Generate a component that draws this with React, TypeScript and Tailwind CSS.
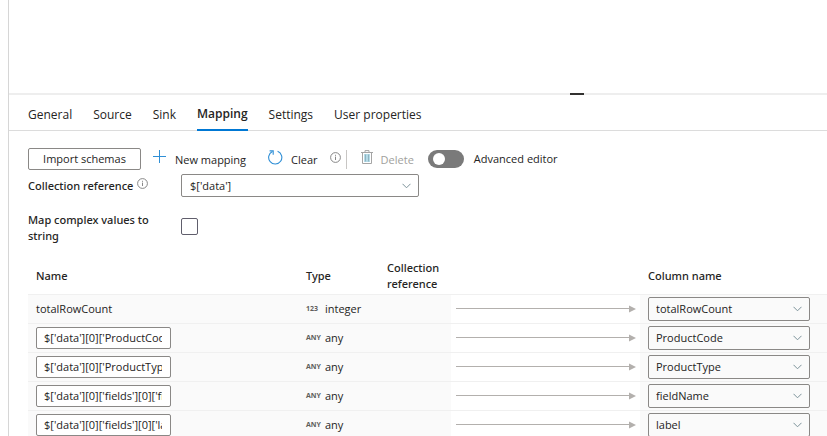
const tabs = ["General", "Source", "Sink", "Mapping", "Settings", "User properties"];

const mappings = [
  { name: "totalRowCount", badge: "123", type: "integer", column: "totalRowCount", editable: false },
  { name: "$['data'][0]['ProductCode']", badge: "ANY", type: "any", column: "ProductCode", editable: true },
  { name: "$['data'][0]['ProductType']", badge: "ANY", type: "any", column: "ProductType", editable: true },
  { name: "$['data'][0]['fields'][0]['fieldName']", badge: "ANY", type: "any", column: "fieldName", editable: true },
  { name: "$['data'][0]['fields'][0]['label']", badge: "ANY", type: "any", column: "label", editable: true },
];

function InfoIcon() {
  return (
    <svg width="11" height="11" viewBox="0 0 11 11" fill="none" className="shrink-0">
      <circle cx="5.5" cy="5.5" r="4.9" stroke="#7a7a7a" strokeWidth="0.9" />
      <path d="M5.5 4.6v3.4M5.5 2.8v1" stroke="#7a7a7a" strokeWidth="0.9" />
    </svg>
  );
}

function PlusIcon() {
  return (
    <svg width="14" height="14" viewBox="0 0 14 14" fill="none" className="shrink-0">
      <path d="M6.5 0v13M0 6.5h13" stroke="#2f8fd6" />
    </svg>
  );
}

function RefreshIcon() {
  return (
    <svg width="15" height="15" viewBox="0 0 15 15" fill="none" className="shrink-0">
      <path d="M9.6 1.3A6.6 6.6 0 1 1 4.4 1.5" stroke="#2f8fd6" strokeWidth="1.1" />
      <path d="M1.6 0.9h3.6v3.8" stroke="#2f8fd6" strokeWidth="1.1" />
    </svg>
  );
}

function TrashIcon() {
  return (
    <svg width="12" height="14" viewBox="0 0 12 14" fill="none" className="shrink-0">
      <path d="M0 2.5h12M4 2.3V0.6h4v1.7" stroke="#a5a5a5" />
      <path d="M1.5 2.5v11h9v-11" stroke="#a5a5a5" />
      <path d="M3 4h6v8H3z" fill="#b5dbe8" />
      <path d="M4.5 4.5v7M7.5 4.5v7" stroke="#8fb4c1" />
    </svg>
  );
}

function Chevron() {
  return (
    <svg
      width="9"
      height="6"
      viewBox="0 0 9 6"
      fill="none"
      className="pointer-events-none absolute right-2 top-1/2 -translate-y-1/2"
    >
      <path d="M0.5 0.8l4 4 4-4" stroke="#7c9299" />
    </svg>
  );
}

function Arrow() {
  return (
    <div className="flex items-center pl-[5px] pr-1">
      <div className="h-px flex-1 bg-[#b3b0ad]" />
      <svg width="7" height="8" viewBox="0 0 7 8">
        <path d="M0 0.5l7 3.5-7 3.5z" fill="#b3b0ad" />
      </svg>
    </div>
  );
}

export default function App() {
  return (
    <div className="h-screen overflow-hidden bg-white pl-2 font-['Open_Sans','Noto_Sans',sans-serif] text-[11px] leading-4 text-[#252423]">
      <div className="flex h-full flex-col border-l border-[#d6d6d6]">
        <div className="h-[93px] shrink-0" />
        <div className="grid h-0.5 shrink-0 grid-cols-[561px_14px_1fr] bg-[#eeeeee]">
          <div className="col-start-2 bg-[#323130]" />
        </div>

        <nav className="flex h-9 shrink-0 gap-[21px] border-b border-[#dcdcdc] pl-[19px] text-[12px]">
          {tabs.map((tab) => (
            <a
              key={tab}
              href="#"
              className={
                tab === "Mapping"
                  ? "-mb-px flex items-center border-b-2 border-[#0078d4] pt-1 font-semibold"
                  : "flex items-center pt-1"
              }
            >
              {tab}
            </a>
          ))}
        </nav>

        <div className="flex shrink-0 items-center pl-[19px] pt-[17px]">
          <button className="h-[22px] w-[113px] rounded-xs border border-[#8a8886]">Import schemas</button>
          <button className="ml-3 flex gap-2">
            <PlusIcon />
            <span className="pt-0.5">New mapping</span>
          </button>
          <button className="ml-[22px] flex gap-2">
            <RefreshIcon />
            <span className="pt-0.5">Clear</span>
          </button>
          <span className="ml-3 pb-1">
            <InfoIcon />
          </span>
          <div className="ml-[5px] h-[19px] w-px bg-[#c8c6c4]" />
          <button disabled className="ml-3.5 flex gap-2 text-[#a19f9d]">
            <TrashIcon />
            <span className="pt-0.5">Delete</span>
          </button>
          <label className="ml-3.5 flex items-center gap-2.5">
            <input
              type="checkbox"
              role="switch"
              className="h-[18px] w-9 appearance-none rounded-full bg-[#7a7a7a] before:ml-[5px] before:mt-[3px] before:block before:size-3 before:rounded-full before:bg-white"
            />
            Advanced editor
          </label>
        </div>

        <div className="flex shrink-0 items-center pl-[19px] pt-1">
          <label htmlFor="collection" className="flex w-[153px] gap-1 font-['Noto_Sans',sans-serif] font-medium">
            Collection reference
            <InfoIcon />
          </label>
          <div className="relative w-[238px]">
            <select id="collection" className="block h-[23px] w-full appearance-none rounded-xs border border-[#8a8886] px-2">
              <option>$['data']</option>
            </select>
            <Chevron />
          </div>
        </div>

        <div className="flex shrink-0 items-start pl-[19px] pt-[15px]">
          <label htmlFor="complex" className="w-[153px] pr-6 font-['Noto_Sans',sans-serif] font-medium">
            Map complex values to string
          </label>
          <input id="complex" type="checkbox" className="mt-1.5 size-[17px] appearance-none rounded-xs border border-[#605e6c]" />
        </div>

        <div className="pl-[19px] pt-[15px]">
          <table className="w-full table-fixed text-left">
            <colgroup>
              <col className="w-[270px]" />
              <col className="w-[81px]" />
              <col className="w-[72px]" />
              <col className="w-[189px]" />
              <col />
            </colgroup>
            <thead className="font-['Noto_Sans',sans-serif]">
              <tr className="h-[35px]">
                <th className="px-2 font-medium">Name</th>
                <th className="px-2 font-medium">Type</th>
                <th className="pl-2 font-medium">Collection reference</th>
                <th />
                <th className="px-2 font-medium">Column name</th>
              </tr>
            </thead>
            <tbody>
              {mappings.map((row) => (
                <tr key={row.column} className="h-[29px] border-t border-[#f0f0f0]">
                  <td className="bg-[#fafafa] px-2">
                    {row.editable ? (
                      <input
                        aria-label="Name"
                        defaultValue={row.name}
                        className="block h-[22px] w-[135px] rounded-xs border border-[#8a8886] bg-white pl-[7px] pr-2"
                      />
                    ) : (
                      row.name
                    )}
                  </td>
                  <td className="bg-[#fafafa] px-2">
                    <div className="flex items-center">
                      <span className="w-[19px] text-[7px] font-bold text-[#605e5c]">{row.badge}</span>
                      {row.type}
                    </div>
                  </td>
                  <td className="bg-[#fafafa]" />
                  <td>
                    <Arrow />
                  </td>
                  <td className="bg-[#fafafa] px-2">
                    <div className="relative w-[162px]">
                      <select
                        aria-label="Column name"
                        className="block h-6 w-full appearance-none rounded-xs border border-[#8a8886] px-[7px]"
                      >
                        <option>{row.column}</option>
                      </select>
                      <Chevron />
                    </div>
                  </td>
                </tr>
              ))}
            </tbody>
          </table>
        </div>
      </div>
    </div>
  );
}
